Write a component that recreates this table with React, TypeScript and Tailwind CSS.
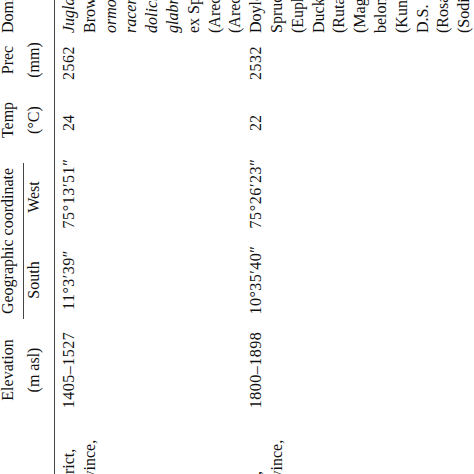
import React from "react";

const cols = "grid grid-cols-[172px_84px_96px_70px_84px_36px_270px]";

const Lines = ({ lines }: { lines: React.ReactNode[] }) => (
  <>
    {lines.map((l, i) => (
      <div key={i} className="whitespace-nowrap">
        {l}
      </div>
    ))}
  </>
);

export default function App() {
  const row1Loc = ["Oxapampa District,", "Oxapampa Province,", "Pasco"];
  const row2Loc = ["Pozuzo District,", "Oxapampa Province,", "Pasco"];
  const row1Dom: React.ReactNode[] = [
    <><i>Juglans neotropica</i> Diels (Juglandaceae), <i>Alnus</i></>,
    <>Brown (Betulaceae), <i>Ocotea f-</i></>,
    <><i>ormosa</i> Kunth (Lauraceae), <i>Miconia</i></>,
    <><i>racemosa</i> (Aubl.) DC. (Melastomataceae),</>,
    <><i>dolichorrhyncha</i> Cuatrec., <i>Clusia</i></>,
    <><i>glabra</i> Ruiz &amp; Pav., <i>Iriartea deltoidea</i></>,
    <>ex Spreng. (Arecaceae), <i>Socratea exorrhiza</i></>,
    <>(Arecaceae), <i>Wettinia maynensis</i> Spruce</>,
    <>(Arecaceae)</>,
  ];
  const row2Dom: React.ReactNode[] = [
    <>Doyle (Cunoniaceae), <i>Hieronyma</i></>,
    <>Spruce ex Benth., <i>Alchornea</i></>,
    <>(Euphorbiaceae), <i>Ocotea</i> sp.</>,
    <>Ducke (Lauraceae), <i>Zanthoxylum</i></>,
    <>(Rutaceae), <i>Talauma</i> sp.</>,
    <>(Magnoliaceae), and species</>,
    <>belonging to <i>Weinmannia</i></>,
    <>(Kunth) Planch., <i>Nectandra</i></>,
    <>D.S. Correa (Cunoniaceae)</>,
    <>(Rosaceae), <i>Prunus</i> sp.</>,
    <>(Sodiro) Cuatrec.</>,
    <>(Lauraceae)</>,
  ];

  return (
    <div className="relative w-[474px] h-[474px] overflow-hidden bg-white">
      <div className="w-[810px] origin-top-left -translate-x-[2px] translate-y-[584px] -rotate-90 font-['Liberation_Serif',serif] text-[16px] leading-[20.8px] text-[#111]">
        {/* header row 1 */}
        <div className={`${cols} h-[26px]`}>
          <div className="pl-[10px] whitespace-nowrap">Location</div>
          <div className="text-center whitespace-nowrap">Elevation</div>
          <div className="col-span-2 ml-[9px] mr-[1px] h-[26px] border-b border-[#444] text-center whitespace-nowrap">
            Geographic coordinate
          </div>
          <div className="text-center whitespace-nowrap">Temp</div>
          <div className="text-center whitespace-nowrap">Prec</div>
          <div className="pl-[9px] whitespace-nowrap">Dominant species</div>
        </div>
        {/* header row 2 */}
        <div className={`${cols} h-[31px] border-b border-[#444]`}>
          <div></div>
          <div className="text-center whitespace-nowrap">(m asl)</div>
          <div className="text-center whitespace-nowrap">South</div>
          <div className="text-center whitespace-nowrap">West</div>
          <div className="text-center whitespace-nowrap">(°C)</div>
          <div className="text-center whitespace-nowrap">(mm)</div>
          <div></div>
        </div>
        {/* body */}
        <div className="pt-[4px]">
          <div className={cols}>
            <div className="pl-[10px]">
              <Lines lines={row1Loc} />
            </div>
            <div className="text-center whitespace-nowrap tracking-[0.5px]">1405–1527</div>
            <div className="text-center whitespace-nowrap tracking-[0.5px]">11°3′39″</div>
            <div className="flex justify-center pl-[7px] whitespace-nowrap tracking-[0.6px]">75°13′51″</div>
            <div className="text-center whitespace-nowrap -ml-[6px]">24</div>
            <div className="text-center whitespace-nowrap tracking-[0.5px] -ml-[6px]">2562</div>
            <div className="pl-[9px]">
              <Lines lines={row1Dom} />
            </div>
          </div>
          <div className={cols}>
            <div className="pl-[10px]">
              <Lines lines={row2Loc} />
            </div>
            <div className="text-center whitespace-nowrap tracking-[0.5px]">1800–1898</div>
            <div className="text-center whitespace-nowrap tracking-[0.5px]">10°35′40″</div>
            <div className="flex justify-center pl-[7px] whitespace-nowrap tracking-[0.6px]">75°26′23″</div>
            <div className="text-center whitespace-nowrap -ml-[6px]">22</div>
            <div className="text-center whitespace-nowrap tracking-[0.5px] -ml-[6px]">2532</div>
            <div className="pl-[9px]">
              <Lines lines={row2Dom} />
            </div>
          </div>
        </div>
      </div>
    </div>
  );
}
